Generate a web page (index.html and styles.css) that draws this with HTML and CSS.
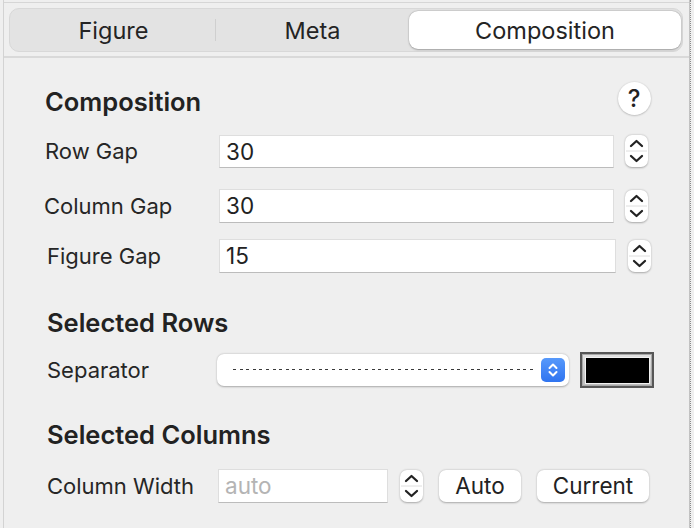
FILE: index.html
```html
<!DOCTYPE html>
<html>
<head>
<meta charset="utf-8">
<link rel="stylesheet" href="styles.css">
</head>
<body>
<div class="app">
  <div class="inspector">
    <div class="toolbar">
      <div class="segmented">
        <div class="seg seg-figure">Figure</div>
        <div class="seg seg-meta">Meta</div>
        <div class="seg seg-active">Composition</div>
      </div>
    </div>
    <div class="content">
      <section class="group group-comp">
        <div class="group-head">
          <h2 class="heading">Composition</h2>
          <div class="help">?</div>
        </div>
        <div class="field-row row-first">
          <div class="label">Row Gap</div>
          <div class="input">30</div>
          <div class="stepper"><svg width="23" height="32" viewBox="0 0 23 32"><polyline points="6,11 11.5,6 17,11" /><line x1="1" y1="16" x2="22" y2="16" class="div"/><polyline points="6,21 11.5,26 17,21" /></svg></div>
        </div>
        <div class="field-row row-second">
          <div class="label label-tight">Column Gap</div>
          <div class="input">30</div>
          <div class="stepper"><svg width="23" height="32" viewBox="0 0 23 32"><polyline points="6,11 11.5,6 17,11" /><line x1="1" y1="16" x2="22" y2="16" class="div"/><polyline points="6,21 11.5,26 17,21" /></svg></div>
        </div>
        <div class="field-row row-third">
          <div class="label label-shift">Figure Gap</div>
          <div class="input input-wide">15</div>
          <div class="stepper stepper-shift"><svg width="23" height="32" viewBox="0 0 23 32"><polyline points="6,11 11.5,6 17,11" /><line x1="1" y1="16" x2="22" y2="16" class="div"/><polyline points="6,21 11.5,26 17,21" /></svg></div>
        </div>
      </section>

      <section class="group group-rows">
        <h2 class="heading">Selected Rows</h2>
        <div class="field-row row-sep">
          <div class="label label-rows">Separator</div>
          <div class="popup">
            <div class="dashes"></div>
            <div class="popup-btn"><svg width="24" height="24" viewBox="0 0 24 24"><polyline points="8.5,10 12,6.5 15.5,10"/><polyline points="8.5,14 12,17.5 15.5,14"/></svg></div>
          </div>
          <div class="colorwell"><div class="swatch"></div></div>
        </div>
      </section>

      <section class="group group-cols">
        <h2 class="heading">Selected Columns</h2>
        <div class="field-row row-width">
          <div class="label label-cols">Column Width</div>
          <div class="input input-small placeholder">auto</div>
          <div class="stepper stepper-small"><svg width="23" height="32" viewBox="0 0 23 32"><polyline points="6,11 11.5,6 17,11" /><line x1="1" y1="16" x2="22" y2="16" class="div"/><polyline points="6,21 11.5,26 17,21" /></svg></div>
          <div class="button btn-auto">Auto</div>
          <div class="button btn-current">Current</div>
        </div>
      </section>
    </div>
  </div>
  <div class="neighbor"></div>
</div>
</body>
</html>
```

FILE: styles.css
```css
* { box-sizing: border-box; }
html, body { margin: 0; padding: 0; }
body {
  width: 694px;
  height: 528px;
  overflow: hidden;
  background: #efefef;
  font-family: Inter, "Liberation Sans", sans-serif;
  color: #262626;
}
.app {
  display: flex;
  height: 528px;
}
.inspector {
  margin-left: 3px;
  width: 687px;
  height: 528px;
  flex-shrink: 0;
  border-left: 1.5px solid #d3d3d3;
  border-right: 1.5px solid #c2c2c2;
  display: flex;
  flex-direction: column;
}
.neighbor {
  flex: 1;
  border-left: 1px dotted #8a8a8a;
}
.toolbar {
  margin-top: 2px;
  border-top: 1.5px solid #d6d6d6;
  border-bottom: 2px solid #d9d9d9;
  padding: 5px 6px 4px 5px;
}
.segmented {
  display: grid;
  grid-template-columns: 205px 193px 1fr;
  height: 44px;
  background: #e3e3e3;
  border-radius: 10px;
  border: 0.5px solid #d8d8d8;
  padding: 1px;
  align-items: stretch;
}
.seg {
  display: flex;
  align-items: center;
  justify-content: center;
  font-size: 23.5px;
  color: #242424;
  position: relative;
}
.seg-figure::after {
  content: "";
  position: absolute;
  right: 0;
  top: 9px;
  bottom: 9px;
  width: 1.5px;
  background: #cfcfcf;
}
.seg-active {
  background: #ffffff;
  border-radius: 9px;
  box-shadow: 0 0.5px 2px rgba(0,0,0,0.28), 0 0 0 0.5px rgba(0,0,0,0.06);
  margin: 1px 0 1px 0;
}
.content {
  padding-left: 41px;
  padding-right: 30px;
}
.group { display: flex; flex-direction: column; }
.heading {
  margin: 0;
  font-size: 25.5px;
  line-height: 30px;
  font-weight: 600;
  color: #222;
}
.group-head {
  display: flex;
  align-items: flex-start;
  justify-content: space-between;
  margin-top: 24px;
}
.group-head .heading { margin-top: 4.5px; }
.help {
  width: 33px;
  height: 33px;
  border-radius: 50%;
  background: #fff;
  box-shadow: 0 0.5px 2px rgba(0,0,0,0.3);
  display: flex;
  align-items: center;
  justify-content: center;
  font-size: 24px;
  font-weight: 500;
  color: #222;
  margin-right: 8.5px;
}
.field-row {
  display: flex;
  align-items: center;
}
.row-first { margin-top: 18px; height: 33px; }
.row-second { margin-top: 21px; height: 34px; }
.row-third { margin-top: 16px; height: 34px; }
.label {
  width: 174px;
  flex-shrink: 0;
  font-size: 22px;
  color: #262626;
}
.label-tight { margin-left: -1px; width: 175px; }
.label-shift { padding-left: 2px; }
.input {
  background: #fff;
  width: 395px;
  flex-shrink: 0;
  height: 100%;
  border: 1px solid #dedede;
  border-bottom: 1.5px solid #bcbcbc;
  font-size: 22.5px;
  padding-left: 6px;
  display: flex;
  align-items: center;
  color: #222;
}
.input-wide { width: 397px; }
.stepper {
  margin-left: 11px;
  width: 23px;
  height: 32px;
  flex-shrink: 0;
  border-radius: 7px;
  background: #fff;
  box-shadow: 0 0.5px 2px rgba(0,0,0,0.3);
}
.stepper-shift { margin-left: 12px; }
.stepper svg { display: block; }
.stepper polyline {
  fill: none;
  stroke: #222;
  stroke-width: 2.3;
  stroke-linecap: round;
  stroke-linejoin: round;
}
.stepper line.div { stroke: #dedede; stroke-width: 1; }

.group-rows { padding-left: 2px; }
.group-rows .heading { margin-top: 35px; }
.row-sep { margin-top: 14px; height: 36px; }
.label-rows { width: 170px; }
.popup {
  width: 352px;
  flex-shrink: 0;
  height: 32px;
  background: #fff;
  border-radius: 7px;
  box-shadow: 0 0.5px 2px rgba(0,0,0,0.3);
  display: flex;
  align-items: center;
  padding: 0 4px 0 16px;
}
.dashes {
  flex: 1;
  height: 1px;
  margin-right: 6px;
  background: repeating-linear-gradient(to right, #3a3a3a 0 3px, transparent 3px 6.6px);
}
.popup-btn {
  width: 24px;
  height: 24px;
  border-radius: 5px;
  background: linear-gradient(#5799fb, #2f74f0);
}
.popup-btn svg { display: block; }
.popup-btn polyline {
  fill: none;
  stroke: #fff;
  stroke-width: 2;
  stroke-linecap: round;
  stroke-linejoin: round;
}
.colorwell {
  margin-left: 11px;
  width: 74px;
  height: 36px;
  flex-shrink: 0;
  border: 2px solid #575757;
  background: linear-gradient(#e4e4e4, #bdbdbd);
  padding: 4px 3px 3px 4px;
  box-shadow: inset 0 0 0 1px #a9a9a9;
}
.swatch {
  width: 100%;
  height: 100%;
  background: #000;
  box-shadow: 0 0 0 1px #f2f2f2;
}

.group-cols { padding-left: 2px; }
.group-cols .heading { margin-top: 32px; }
.row-width { margin-top: 19px; height: 34px; }
.label-cols { width: 171px; }
.input-small { width: 170px; }
.placeholder { color: #b4b4b4; }
.stepper-small { margin-left: 12px; }
.button {
  height: 32px;
  flex-shrink: 0;
  background: #fff;
  border-radius: 7px;
  box-shadow: 0 0.5px 2px rgba(0,0,0,0.3);
  font-size: 22.5px;
  display: flex;
  align-items: center;
  justify-content: center;
  color: #222;
}
.btn-auto { margin-left: 16px; width: 82px; }
.btn-current { margin-left: 16px; width: 112px; }
```
